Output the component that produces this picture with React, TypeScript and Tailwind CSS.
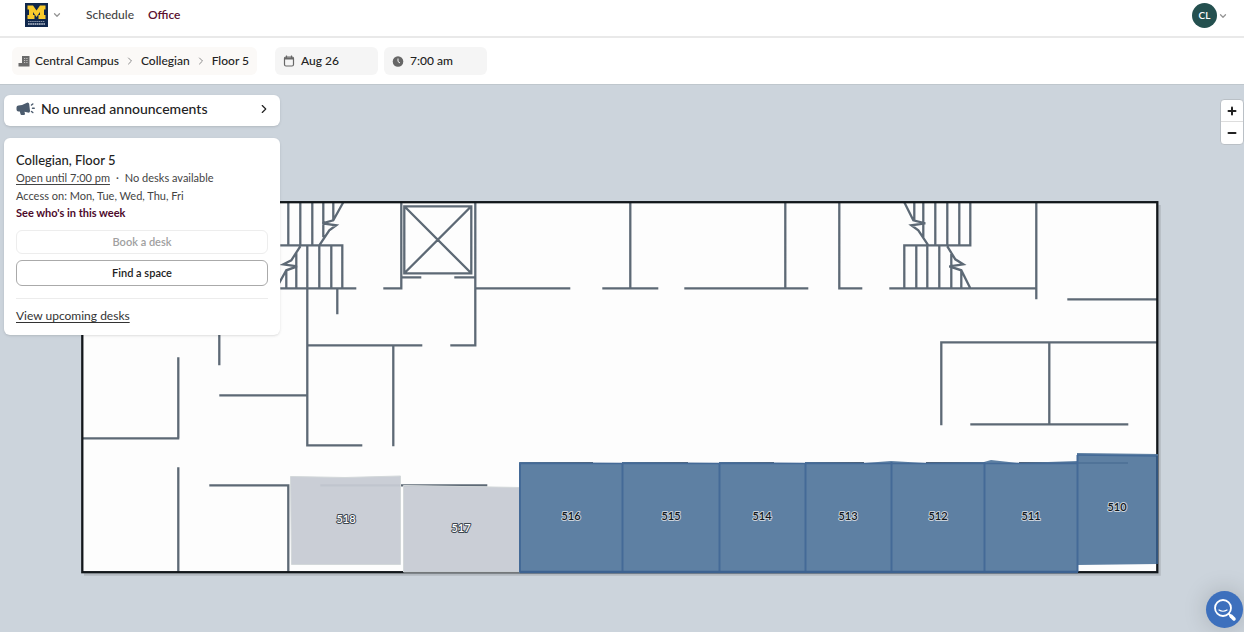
import React, { useState } from "react";
import { ChevronDown, ChevronRight, Minus, Plus } from "lucide-react";

const WALLS = [
  // left wing
  "M219 330V365 M178 357V438 M82 438H179 M219 395H307 M178 467V572",
  "M209 485H288V572 M320 485H487",
  "M307 245V445H362 M307 345H422 M393 345V446 M450 345H475V202",
  // lift lobby
  "M280 288H356 M337 288V314 M383 288H401V202 M401 277H421 M454 277H475",
  "M404 206H471V273H404Z M404 206L471 273 M471 206L404 273",
  // north rooms
  "M475 288H570 M602 288H658 M684 288H808 M630 202V288 M785 202V288 M839 202V288H862",
  // right wing
  "M889 288H1036 M1036 202V299 M1067 299H1157 M941 425V342H1157 M1049 342V424 M970 424H1128",
  // left stairs
  "M280 245H342V288 M288 202V245 M300 202V245 M312 202V245 M323 202V237 M333 202V220",
  "M286 270V288 M296 252V288 M319 245V288 M331 245V288",
  "M343 202L333 220L322 223L336 225L329 230L319 245",
  "M300 246L291 260L283 264L297 266L286 270L276 288",
  // right stairs
  "M904 288V245H970V202 M914 202V220 M923 202V237 M935 202V245 M947 202V245 M959 202V245",
  "M916 245V288 M927 245V288 M939 245V288 M951 252V288 M961 270V288",
  "M904 202L913 220L925 223L911 225L918 230L928 245",
  "M947 246L955 259L963 264L949 266L961 270L970 288",
];

const ROOMS = [
  { id: "518", x: 346, y: 523, open: false, points: "290.5,476.5 345,477.500 400.500,476 400.500,564.500 291.500,564.500" },
  { id: "517", x: 461, y: 532, open: false, points: "403.500,485.500 520,487.500 520,572 403.500,572" },
  { id: "516", x: 571, y: 520, open: true, points: "519,462 622,463 622,573 519,573" },
  { id: "515", x: 671, y: 520, open: true, points: "622,462 719,463 719,573 622,573" },
  { id: "514", x: 762, y: 520, open: true, points: "719,462 805,463 805,573 719,573" },
  { id: "513", x: 848, y: 520, open: true, points: "805,462 865,463 891,461 891,573 805,573" },
  { id: "512", x: 938, y: 520, open: true, points: "891,461 925,463 984,462 984,573 891,573" },
  { id: "511", x: 1031, y: 520, open: true, points: "984,462 991,460 1019,463 1077,461 1077,573 984,573" },
  { id: "510", x: 1117, y: 511, open: true, points: "1077,453 1158,454 1158,564 1077,565" },
];

const FloorMap = () => (
  <svg viewBox="0 85 1244 547" className="block w-full" role="img" aria-label="Collegian, Floor 5">
    <path d="M84 574.500H1159.500V205" fill="none" stroke="#b3b9c0" strokeWidth="2.500" />
    <rect x="82" y="202" width="1075" height="370" fill="#fdfdfd" />
    <path d={WALLS.join(" ")} transform="translate(.3 .3)" fill="none" stroke="#5d6975" strokeWidth="2.300" />
    <rect x="82.300" y="202.200" width="1075" height="370" fill="none" stroke="#12171b" strokeWidth="2.300" />
    <path d="M520 463H593 M622 463H688 M719 463H774 M805 463H864 M926 463H984 M1019 463H1128" stroke="#4f5f70" strokeWidth="2" />
    {ROOMS.map((room) => (
      <g key={room.id}>
        <polygon
          points={room.points}
          fill={room.open ? "#50759b" : "#c7cbd3"}
          fillOpacity={room.open ? 0.92 : 0.94}
          stroke={room.open ? "none" : "#d3d8da"}
        />
        <text
          x={room.x}
          y={room.y}
          textAnchor="middle"
          fill={room.open ? "#10151b" : "#ffffff"}
          stroke={room.open ? "#c9d1da" : "#3d4650"}
          strokeWidth="2"
          strokeLinejoin="round"
          paintOrder="stroke"
          className="text-[11px] font-semibold"
        >
          {room.id}
        </text>
      </g>
    ))}
    <path
      d="M520 463V572 M622.500 463V572 M719.500 463V572 M805.500 463V572 M891.500 462V572 M984.500 462V572 M1077.500 455V572"
      stroke="#446a97"
      strokeWidth="2"
    />
    <path d="M520 463.500H1077 M1077 455L1157 456" fill="none" stroke="#446a97" strokeWidth="1.500" />
    <path d="M520 572H1078" stroke="#3d6290" strokeWidth="2.500" />
    <path d="M1157 456V564" stroke="#33567f" strokeWidth="2" />
  </svg>
);

const Logo = () => (
  <svg viewBox="0 0 23 24" className="h-6 w-[23px]" aria-hidden="true">
    <rect width="23" height="24" fill="#10274c" />
    <path
      d="M2.500 2.500H8L11.500 7.500L15 2.500H20.500V6.500H19V12H20.500V16H13.500V12H15V9L11.500 14L8 9V12H9.500V16H2.500V12H4V6.500H2.500Z"
      fill="#f8ca2c"
    />
    <path d="M3 18.500H20" stroke="#8996aa" strokeDasharray="1.500 .6" />
    <path d="M3 21H20" stroke="#bac3cf" strokeWidth="1.500" strokeDasharray="1.700 .5" />
  </svg>
);

const BuildingIcon = () => (
  <svg viewBox="0 0 12 12" className="h-3 w-3" aria-hidden="true">
    <path d="M4 1H11.500V11.500H.5V8H4Z" fill="#6b6b6b" />
    <path d="M6 3.500H7.200M8.300 3.500H9.500M6 5.500H7.200M8.300 5.500H9.500M6 7.500H7.200M8.300 7.500H9.500" stroke="#c4c2c1" />
  </svg>
);

const CalendarIcon = () => (
  <svg viewBox="0 0 12 12" className="h-3 w-3" fill="none" stroke="#686868" aria-hidden="true">
    <rect x="1.500" y="2" width="9" height="9" rx="1.500" strokeWidth="1.200" />
    <path d="M1.500 3.500H10.500" strokeWidth="2" />
    <path d="M3.500 .5V3M8.500 .5V3" strokeWidth="1.200" />
  </svg>
);

const ClockIcon = () => (
  <svg viewBox="0 0 12 12" className="h-3 w-3" aria-hidden="true">
    <circle cx="6" cy="6.500" r="5.300" fill="#666666" />
    <path d="M6 3.500V6.500L8 8" fill="none" stroke="#f5f5f5" />
  </svg>
);

const MegaphoneIcon = () => (
  <svg viewBox="0 0 20 16" className="h-4 w-5" fill="#4c5c6e" aria-hidden="true">
    <path d="M11.500 1.500Q13 1.500 13.200 3L14 10Q14 12 12 11.600L8.500 10.800L9 13Q9 14 7.800 14H5.500Q4.800 14 4.500 13L3.800 10.500H2.500Q.5 10.500 .5 8.500V6.500Q.5 4.800 2.500 4.600L6 4Z" />
    <path d="M15.500 4L16.800 3M16.500 7.300H18.200M15.500 10.500L16.800 11.500" stroke="#4c5c6e" strokeWidth="1.500" strokeLinecap="round" />
  </svg>
);

const SearchIcon = () => (
  <svg viewBox="0 0 24 24" className="h-6 w-6" fill="none" stroke="white" strokeLinecap="round" aria-hidden="true">
    <circle cx="10" cy="10" r="8" strokeWidth="1.800" />
    <path d="M6 12Q10 14.500 14 12" strokeWidth="1.200" />
    <path d="M16 16L17.500 17.500" strokeWidth="2" />
    <path d="M18 18L21 21" strokeWidth="3.500" />
  </svg>
);

const App = () => {
  const [floor] = useState("Floor 5");

  return (
    <div className="flex min-h-screen flex-col overflow-hidden bg-white font-['Lato',sans-serif] text-xs text-[#222222]">
      <header className="flex h-[38px] items-start justify-between border-b-2 border-[#e9e9e9] pr-4 pl-[25px]">
        <div className="flex items-center pt-[3px]">
          <button aria-label="Switch organization" className="flex items-center gap-1">
            <Logo />
            <ChevronDown size={10} strokeWidth={3} className="text-[#959595]" />
          </button>
          <nav className="ml-6 flex gap-[14px] font-medium">
            <a href="#schedule" className="text-[#444444]">Schedule</a>
            <a href="#office" className="font-semibold text-[#5c1030]">Office</a>
          </nav>
        </div>
        <button aria-label="Account" className="flex items-center gap-px pt-[3px]">
          <span className="flex size-[25px] items-center justify-center rounded-full bg-[#24504f] text-[10px] font-semibold text-white">
            CL
          </span>
          <ChevronDown size={10} strokeWidth={3} className="text-[#959595]" />
        </button>
      </header>

      <div className="flex h-[47px] items-center border-b border-[#bfc7cd] px-3 font-medium">
        <nav aria-label="Breadcrumb" className="flex h-7 items-center gap-[5px] rounded-md bg-[#fbf9f7] pr-2 pl-[6px]">
          <BuildingIcon />
          <a href="#campus">Central Campus</a>
          <ChevronRight size={12} className="text-[#8b8b8b]" />
          <a href="#collegian">Collegian</a>
          <ChevronRight size={12} className="text-[#8b8b8b]" />
          <a href="#floor">{floor}</a>
        </nav>
        <button className="ml-[18px] flex h-7 w-[103px] items-center gap-[6px] rounded-md bg-[#f5f5f5] px-2">
          <CalendarIcon />
          Aug 26
        </button>
        <button className="ml-[6px] flex h-7 w-[103px] items-center gap-[6px] rounded-md bg-[#f5f5f5] px-2">
          <ClockIcon />
          7:00 am
        </button>
      </div>

      <main className="relative flex-1 bg-[#ccd4dc]">
        <FloorMap />

        <div className="absolute top-[10px] left-1 flex w-[276px] flex-col gap-3">
          <button className="flex h-[31px] items-center gap-[5px] rounded-md bg-white pr-[9px] pb-[3px] pl-3 text-sm font-medium shadow">
            <MegaphoneIcon />
            No unread announcements
            <ChevronRight size={14} className="ml-auto" />
          </button>

          <section className="rounded-md bg-white px-3 pt-[13px] pb-[11px] text-[11px] shadow-sm">
            <h1 className="text-[13px] leading-[18px] font-medium">Collegian, Floor 5</h1>
            <p className="leading-[18px] text-[#444444]">
              <a href="#hours" className="underline underline-offset-2">Open until 7:00 pm</a>
              <span className="mx-[6px]">·</span>
              No desks available
            </p>
            <p className="leading-[18px] text-[#444444]">Access on: Mon, Tue, Wed, Thu, Fri</p>
            <a href="#week" className="block leading-4 font-bold text-[#4d0a2b]">See who's in this week</a>
            <button disabled className="mt-[9px] h-6 w-full rounded-md border border-[#ededed] font-semibold text-[#a0a0a0]">
              Book a desk
            </button>
            <button className="mt-[6px] h-[26px] w-full rounded-md border border-[#aaaaaa] font-semibold">
              Find a space
            </button>
            <div className="mt-3 border-t border-[#ececec] pt-[9px]">
              <a href="#upcoming" className="block text-xs leading-4 text-[#333333] underline underline-offset-2">
                View upcoming desks
              </a>
            </div>
          </section>
        </div>

        <div className="absolute top-[14px] right-0 flex w-6 flex-col divide-y divide-[#dddddd] rounded border border-[#bac0c6] bg-white">
          <button aria-label="Zoom in" className="flex h-[22px] items-center justify-center">
            <Plus size={12} strokeWidth={4} />
          </button>
          <button aria-label="Zoom out" className="flex h-[22px] items-center justify-center">
            <Minus size={12} strokeWidth={4} />
          </button>
        </div>

        <button
          aria-label="Search help"
          className="absolute right-[1px] bottom-[4px] flex size-[37px] items-center justify-center rounded-full bg-[#3d70bd] shadow-[0_0_24px_rgba(0,0,0,0.18)]"
        >
          <SearchIcon />
        </button>
      </main>
    </div>
  );
};

export default App;
